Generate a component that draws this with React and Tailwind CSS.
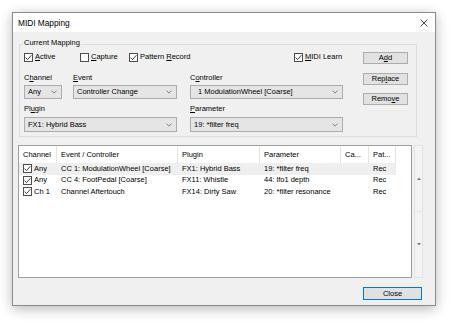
import React from "react";

// Small Win32-style pieces

function Check({ checked }) {
  return (
    <span className="w-[9px] h-[9px] border border-[#4d4d4d] bg-white flex items-center justify-center shrink-0">
      {checked && (
        <svg width="7" height="7" viewBox="0 0 7 7">
          <path d="M0.6 3.6 L2.6 5.6 L6.4 1.2" fill="none" stroke="#2b2b2b" strokeWidth="0.9" />
        </svg>
      )}
    </span>
  );
}

function Key({ pre, k, post }) {
  return (
    <span>
      {pre}
      <span className="underline underline-offset-[1px]">{k}</span>
      {post}
    </span>
  );
}

function CheckItem({ checked, children, className = "" }) {
  return (
    <div className={`flex items-center gap-[2px] h-[10px] ${className}`}>
      <Check checked={checked} />
      <span className="leading-[10px]">{children}</span>
    </div>
  );
}

function Chevron() {
  return (
    <svg width="6" height="4" viewBox="0 0 6 4" className="shrink-0">
      <path d="M0.5 0.6 L3 3.2 L5.5 0.6" fill="none" stroke="#6a6a6a" strokeWidth="0.8" />
    </svg>
  );
}

function Combo({ value, className = "", textClass = "pl-[3px]" }) {
  return (
    <div className={`flex items-center justify-between bg-[#e5e5e5] border border-[#acacac] pr-[4px] ${className}`}>
      <span className={`leading-[10px] whitespace-nowrap ${textClass}`}>{value}</span>
      <Chevron />
    </div>
  );
}

function Button({ children, className = "", focused = false }) {
  return (
    <div
      className={`flex items-center justify-center bg-[#e1e1e1] border ${
        focused ? "border-[#0078d7]" : "border-[#adadad]"
      } leading-[10px] ${className}`}
    >
      {children}
    </div>
  );
}

const columns = [
  { label: "Channel", w: "w-[38px]" },
  { label: "Event / Controller", w: "w-[121px]" },
  { label: "Plugin", w: "w-[82px]" },
  { label: "Parameter", w: "w-[81px]" },
  { label: "Ca...", w: "w-[28px]" },
  { label: "Pat...", w: "w-[27px]" },
];

const rows = [
  ["Any", "CC 1: ModulationWheel [Coarse]", "FX1: Hybrid Bass", "19: *filter freq", "", "Rec"],
  ["Any", "CC 4: FootPedal [Coarse]", "FX11: Whistle", "44: lfo1 depth", "", "Rec"],
  ["Ch 1", "Channel Aftertouch", "FX14: Dirty Saw", "20: *filter resonance", "", "Rec"],
];

export default function App() {
  return (
    <div className="w-[450px] h-[321px] bg-white pt-[12px] pl-[12px] text-[7.5px] text-black font-['Liberation_Sans',Arial,sans-serif]">
      <div className="w-[424px] h-[294px] border border-[#8c8c8c] bg-[#f0f0f0] shadow-[0_3px_12px_rgba(0,0,0,0.28)] flex flex-col">
        {/* Title bar */}
        <div className="h-[19px] bg-white flex items-center justify-between pl-[5px] pr-[7px] shrink-0">
          <span className="text-[8.3px] leading-[10px]">MIDI Mapping</span>
          <svg width="8" height="8" viewBox="0 0 8 8">
            <path d="M0.5 0.5 L7.5 7.5 M7.5 0.5 L0.5 7.5" stroke="#1a1a1a" strokeWidth="0.8" />
          </svg>
        </div>

        {/* Current Mapping group */}
        <div className="relative mt-[12px] ml-[6px] w-[398px] h-[93px] border border-[#dcdcdc] shrink-0">
          <span className="absolute left-[3px] top-[-7px] px-[1px] leading-[9px] bg-[#f0f0f0]">Current Mapping</span>
          <div className="flex pl-[4px] pt-[7px]">
            <div className="w-[319px] flex flex-col">
              <div className="flex h-[10px]">
                <CheckItem checked className="w-[56px]">
                  <Key k="A" post="ctive" />
                </CheckItem>
                <CheckItem className="w-[49px]">
                  <Key k="C" post="apture" />
                </CheckItem>
                <CheckItem checked className="w-[165px]">
                  <Key pre="Pattern " k="R" post="ecord" />
                </CheckItem>
                <CheckItem checked>
                  <Key k="M" post="IDI Learn" />
                </CheckItem>
              </div>

              <div className="flex mt-[11px] h-[9px] leading-[9px]">
                <span className="w-[49px]">
                  <Key pre="C" k="h" post="annel" />
                </span>
                <span className="w-[117px]">
                  <Key k="E" post="vent" />
                </span>
                <span>
                  <Key pre="C" k="o" post="ntroller" />
                </span>
              </div>

              <div className="flex mt-[3px] h-[14px]">
                <Combo value="Any" className="w-[38px]" />
                <Combo value="Controller Change" className="w-[104px] ml-[11px]" />
                <Combo value="1 ModulationWheel [Coarse]" className="w-[153px] ml-[13px]" textClass="pl-[7px]" />
              </div>

              <div className="flex mt-[5px] h-[9px] leading-[9px]">
                <span className="w-[166px]">
                  <Key pre="Pl" k="u" post="gin" />
                </span>
                <span>
                  <Key k="P" post="arameter" />
                </span>
              </div>

              <div className="flex mt-[4px] h-[15px]">
                <Combo value="FX1: Hybrid Bass" className="w-[153px]" />
                <Combo value="19: *filter freq" className="w-[153px] ml-[13px]" />
              </div>
            </div>

            <div className="ml-[20px] flex flex-col w-[45px]">
              <Button className="h-[12px]">
                <Key pre="A" k="d" post="d" />
              </Button>
              <Button className="h-[12px] mt-[9px]">
                <Key pre="Rep" k="l" post="ace" />
              </Button>
              <Button className="h-[12px] mt-[8px]">
                <Key pre="Remo" k="v" post="e" />
              </Button>
            </div>
          </div>
        </div>

        {/* Mapping list */}
        <div className="flex mt-[8px] ml-[5px] h-[133px] shrink-0">
          <div className="w-[394px] h-full border border-[#a0a0a0] bg-white flex flex-col">
            <div className="flex h-[17px] shrink-0">
              {columns.map((c) => (
                <div key={c.label} className={`${c.w} h-full border-r border-[#e5e5e5] flex items-center pl-[4px] whitespace-nowrap overflow-hidden`}>
                  {c.label}
                </div>
              ))}
            </div>
            {rows.map((r, i) => (
              <div key={i} className={`flex h-[11.5px] w-[377px] items-center ${i === 0 ? "bg-[#efefef]" : ""}`}>
                {r.map((cell, j) => (
                  <div key={j} className={`${columns[j].w} flex items-center gap-[2px] pl-[4px] whitespace-nowrap overflow-hidden leading-[10px]`}>
                    {j === 0 && <Check checked />}
                    {cell}
                  </div>
                ))}
              </div>
            ))}
          </div>

          <div className="ml-[2px] w-[9px] h-full flex flex-col">
            <div className="flex-1 border border-[#e3e3e3] bg-[#f3f3f3] flex items-center justify-center">
              <svg width="4" height="3" viewBox="0 0 4 3">
                <path d="M0 3 L2 0.6 L4 3 Z" fill="#7a7a7a" />
              </svg>
            </div>
            <div className="flex-1 border border-t-0 border-[#e3e3e3] bg-[#f3f3f3] flex items-center justify-center">
              <svg width="4" height="3" viewBox="0 0 4 3">
                <path d="M0 0 L2 2.4 L4 0 Z" fill="#7a7a7a" />
              </svg>
            </div>
          </div>
        </div>

        {/* Footer */}
        <div className="flex justify-end pr-[13px] mt-[9px]">
          <Button focused className="w-[59px] h-[13px]">
            Close
          </Button>
        </div>
      </div>
    </div>
  );
}
